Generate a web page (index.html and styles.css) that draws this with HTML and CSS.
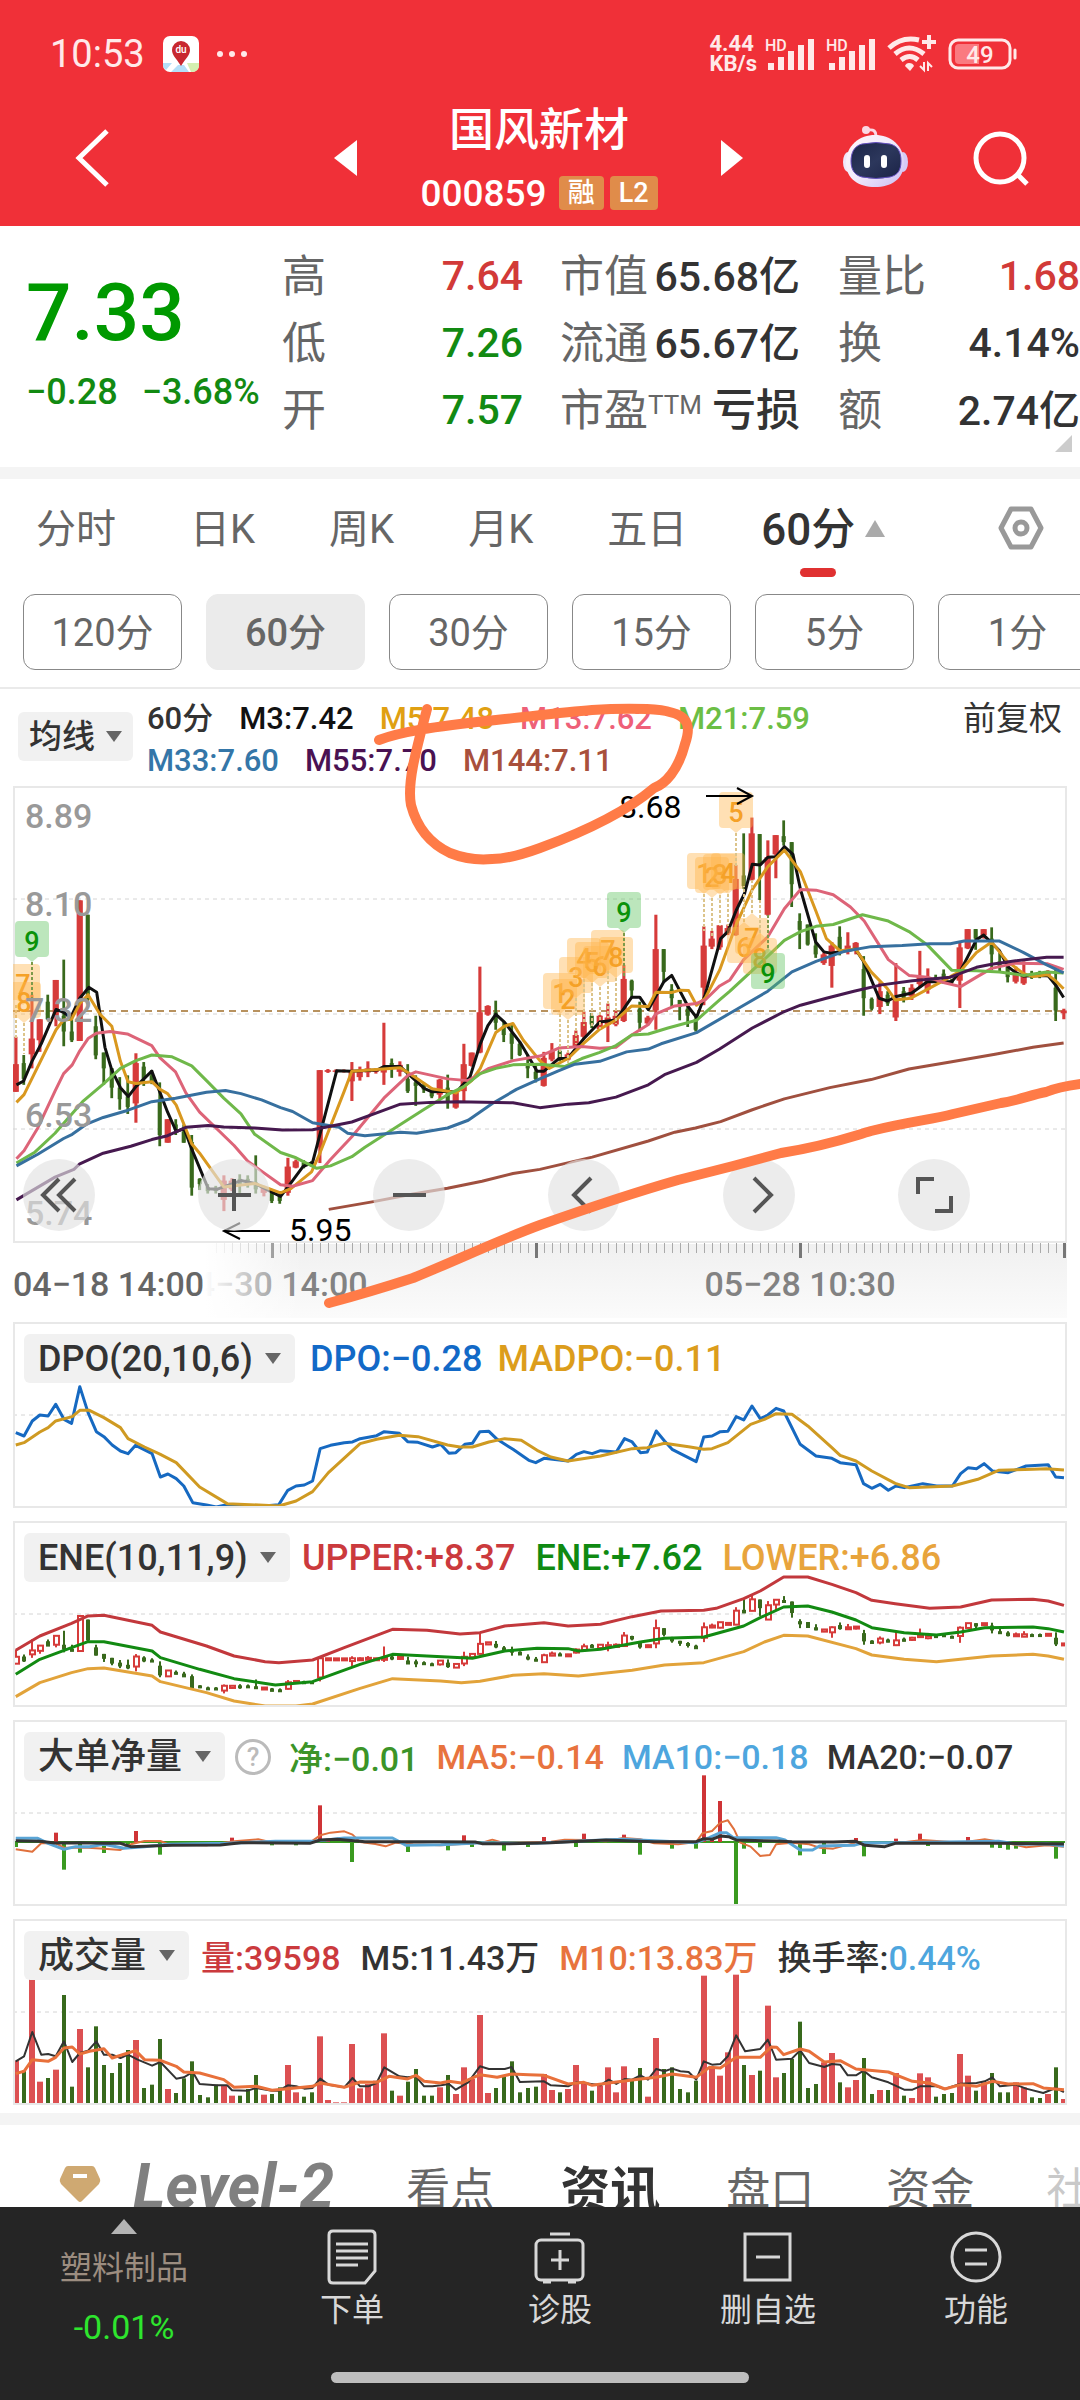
FILE: index.html
```
<!DOCTYPE html>
<html lang="zh-CN">
<head>
<meta charset="UTF-8">
<meta name="viewport" content="width=device-width, initial-scale=1.0">
<title>国风新材 000859</title>
<link rel="stylesheet" href="styles.css">
</head>
<body>
<header class="top">
    <div class="status">
        <span class="clock">10:53</span>
        <svg class="app-icon" viewBox="0 0 36 36">
            <rect width="36" height="36" rx="7" fill="#fff"/>
            <path d="M24 27h12v2q0 7-7 7h-1z" fill="#d4efb0"/>
            <path d="M0 27h9L3 34q-3-2-3-5zM15 29h6l5 7H8z" fill="#b4dff8"/>
            <path d="M18 30C13 22 9 19 9 14a9 9 0 0 1 18 0c0 5-4 8-9 16z" fill="#c8282f"/>
            <text x="18" y="17" class="du">du</text>
        </svg>
        <span class="dots"><i></i><i></i><i></i></span>
        <div class="status-right">
            <span class="speed">4.44<br>KB/s</span>
            <svg width="50" height="36" viewBox="0 0 50 36">
                <text x="0" y="15" class="hd">HD</text>
                <path d="M6 34v-7M16 34V21M26 34V15M36 34V9M46 34V3" class="bars"/>
            </svg>
            <svg width="50" height="36" viewBox="0 0 50 36">
                <text x="0" y="15" class="hd">HD</text>
                <path d="M6 34v-7M16 34V21M26 34V15M36 34V9M46 34V3" class="bars"/>
            </svg>
            <svg width="50" height="38" viewBox="0 0 50 38">
                <path d="M2 13Q15 1 32 5M8 19q14-12 29 0M14 25q9-7 17 0" class="wifi"/>
                <path d="M22 28q4 0 5 3l-4 5-5-5q1-3 4-3z" fill="#ffe9e9"/>
                <path d="M42 0v14M35 7h14" class="plus"/>
                <path d="M37 27v8l-4-4M41 36v-8l4 4" class="tiny"/>
            </svg>
            <svg width="70" height="32" viewBox="0 0 70 32">
                <rect x="2" y="2" width="60" height="28" rx="8" fill="none" stroke="#ffe9e9" stroke-width="3"/>
                <path d="M11 6h20v20H11q-4 0-4-4V10q0-4 4-4z" fill="#fa7a80"/>
                <path d="M67 12v8" stroke="#ffe9e9" stroke-width="3" stroke-linecap="round"/>
                <text x="32" y="25" class="bat">49</text>
            </svg>
        </div>
    </div>
    <nav class="titlebar">
        <button class="icon-button back" aria-label="返回"><svg width="36" height="60" viewBox="0 0 36 60"><path d="M33 3L5 30l28 27" class="chev"/></svg></button>
        <button class="icon-button prev" aria-label="上一只"><svg width="24" height="36" viewBox="0 0 24 36"><path d="M23 0v36L0 18z" fill="#fff"/></svg></button>
        <div class="stock">
            <h1>国风新材</h1>
            <p><span>000859</span><b>融</b><b>L2</b></p>
        </div>
        <button class="icon-button next" aria-label="下一只"><svg width="24" height="36" viewBox="0 0 24 36"><path d="M1 0v36l22-18z" fill="#fff"/></svg></button>
        <button class="icon-button robot" aria-label="助手"><svg width="68" height="64" viewBox="0 0 68 64">
            <defs>
                <linearGradient id="visor" x1="0" y1="0" x2="1" y2="1"><stop offset="0" stop-color="#1c2547"/><stop offset=".5" stop-color="#2c375c"/><stop offset="1" stop-color="#1b2347"/></linearGradient>
                <linearGradient id="shell" x1="0" y1="0" x2="1" y2="1"><stop offset="0" stop-color="#fff6fa"/><stop offset=".5" stop-color="#f1eafb"/><stop offset="1" stop-color="#cabcf3"/></linearGradient>
            </defs>
            <path d="M34 10q0-7-7-6" fill="none" stroke="#fbd8e4" stroke-width="3"/>
            <circle cx="24" cy="4" r="4" fill="#fbd8e4"/>
            <ellipse cx="6" cy="36" rx="5" ry="10" fill="#efe6fb"/><ellipse cx="61" cy="36" rx="5" ry="10" fill="#d6caf6"/>
            <path d="M33 9C48 9 62 19 62 37c0 16-13 24-29 24S4 53 4 37C4 19 18 9 33 9z" fill="url(#shell)"/>
            <path d="M20 18q14-3 28 0c8 2 11 8 11 17s-3 14-11 16q-14 3-28 0c-8-2-11-8-11-16s3-15 11-17z" fill="url(#visor)" stroke="#6450c0" stroke-width="1"/>
            <path d="M25 32v7M42 32v7" stroke="#fff" stroke-width="6" stroke-linecap="round"/>
        </svg></button>
        <button class="icon-button search" aria-label="搜索"><svg width="58" height="58" viewBox="0 0 58 58"><circle cx="28" cy="29" r="24" class="lens"/><path d="M45 45l10 10" class="lens"/></svg></button>
    </nav>
</header>

<section class="quote">
    <div class="price">
        <strong>7.33</strong>
        <p><span>−0.28</span><span>−3.68%</span></p>
    </div>
    <dl>
        <div><dt>高</dt><dd class="red">7.64</dd></div>
        <div><dt>低</dt><dd class="green">7.26</dd></div>
        <div><dt>开</dt><dd class="green">7.57</dd></div>
    </dl>
    <dl>
        <div><dt>市值</dt><dd class="unit">65.68亿</dd></div>
        <div><dt>流通</dt><dd class="unit">65.67亿</dd></div>
        <div><dt>市盈<sup>TTM</sup></dt><dd class="loss">亏损</dd></div>
    </dl>
    <dl>
        <div><dt>量比</dt><dd class="red">1.68</dd></div>
        <div><dt>换</dt><dd>4.14%</dd></div>
        <div><dt>额</dt><dd class="unit">2.74亿</dd></div>
    </dl>
    <i class="corner"></i>
</section>

<nav class="tabs">
    <button>分时</button>
    <button>日K</button>
    <button>周K</button>
    <button>月K</button>
    <button>五日</button>
    <button class="active">60分</button>
    <i class="up"></i>
    <button class="setting" aria-label="设置"><svg width="46" height="44" viewBox="0 0 46 44"><path d="M13 3h20l10 19-10 19H13L3 22z" /><circle cx="23" cy="22" r="6"/></svg></button>
</nav>
<div class="periods">
    <button>120分</button>
    <button class="active">60分</button>
    <button>30分</button>
    <button>15分</button>
    <button>5分</button>
    <button>1分</button>
</div>

<main class="charts">
    <div class="ma">
        <span class="pick"><select aria-label="主图指标"><option>均线</option></select></span>
        <ul class="ma-list">
            <li>60分</li>
            <li class="m3">M3:7.42</li>
            <li class="m5">M5:7.48</li>
            <li class="m13">M13:7.62</li>
            <li class="m21">M21:7.59</li>
            <li class="m33">M33:7.60</li>
            <li class="m55">M55:7.70</li>
            <li class="m144">M144:7.11</li>
        </ul>
        <span class="adjust">前复权</span>
    </div>

    <div class="kline">
        <svg class="plot" viewBox="0 0 1054 532">
            <defs>
                <linearGradient id="axisBg" x1="0" y1="0" x2="0" y2="1"><stop offset="0" stop-color="#f0f0f0"/><stop offset="1" stop-color="#fbfbfb"/></linearGradient>
                <linearGradient id="axisFade"><stop offset="0" stop-color="#fff"/><stop offset=".66" stop-color="#fff"/><stop offset="1" stop-color="#fff" stop-opacity="0"/></linearGradient>
            </defs>
            <rect x="1" y="1" width="1052" height="455" class="frame"/>
            <path d="M0 113h1054M0 228h1054M0 343h1054" class="grid"/>
            <path d="M0 225h1054" class="last"/>
            <g transform="scale(.34435 .35075) translate(-38 -45)">
                <g id="candles"></g>
                <g class="line">
                    <polyline stroke="#111" points="48,897 69,886 93,830 120,780 163,682 185,690 205,706 232,650 258,619 281,633 305,790 325,855 350,905 373,930 395,902 441,858 487,975 512,1030 535,1022 557,1080 605,1193 630,1195 700,1170 740,1178 790,1203 815,1215 835,1190 880,1130 908,1118 978,857 1020,858 1095,855 1115,845 1163,845 1185,865 1233,908 1255,917 1300,915 1325,918 1365,875 1395,780 1417,728 1440,696 1465,718 1510,775 1560,858 1580,858 1623,822 1649,822 1696,765 1742,718 1789,712 1835,647 1858,647 1883,683 1928,603 1951,585 1998,673 2023,705 2048,640 2093,480 2114,460 2138,400 2163,350 2185,268 2208,270 2230,248 2253,247 2278,218 2303,240 2325,340 2369,490 2393,518 2413,522 2485,510 2508,545 2553,650 2578,658 2603,645 2648,635 2693,603 2764,603 2788,575 2836,483 2857,470 2903,515 2927,560 2950,577 2973,587 3043,585 3068,615 3089,648"/>
                    <polyline stroke="#d9981f" points="48,947 70,925 163,740 185,712 208,710 232,665 256,640 290,695 325,730 350,830 372,888 395,893 441,888 465,910 487,922 512,955 557,1065 580,1092 650,1188 740,1178 815,1205 845,1193 905,1145 930,1090 1000,915 1022,858 1163,848 1210,878 1255,908 1300,915 1325,920 1370,885 1395,850 1440,748 1465,730 1490,722 1520,770 1568,828 1595,850 1650,822 1696,778 1742,738 1789,712 1835,672 1883,674 1905,633 1950,634 1975,627 2000,628 2023,670 2048,650 2090,570 2138,440 2185,340 2230,275 2278,228 2325,290 2369,400 2400,480 2440,515 2485,510 2530,575 2575,620 2600,655 2645,650 2693,625 2740,600 2790,572 2836,520 2880,490 2925,545 2973,580 3000,588 3043,583 3065,600 3089,623"/>
                    <polyline stroke="#dd6478" points="48,1108 70,1085 110,1020 160,915 185,865 210,840 232,800 256,765 280,750 320,745 370,752 441,785 465,820 510,860 540,920 580,975 680,1070 720,1115 815,1182 850,1186 908,1170 960,1110 1022,1045 1115,935 1185,870 1208,860 1300,880 1360,885 1400,862 1420,850 1490,828 1568,815 1623,792 1690,788 1742,793 1789,790 1835,755 1883,725 1905,695 1960,672 2023,665 2048,655 2090,615 2120,598 2160,540 2230,475 2278,395 2325,340 2370,342 2420,355 2470,390 2510,430 2580,540 2640,585 2693,590 2740,605 2790,617 2836,590 2880,565 2950,550 3043,552 3089,568"/>
                    <polyline stroke="#6fb84a" points="48,1120 100,1090 160,1035 200,990 240,945 300,895 350,850 395,828 441,812 500,817 557,843 600,885 650,935 700,980 740,1038 815,1090 860,1105 920,1135 960,1128 1022,1102 1060,1075 1163,1010 1230,968 1300,925 1347,902 1395,865 1440,850 1490,840 1568,838 1640,845 1690,822 1740,805 1789,785 1835,755 1883,752 1940,735 2023,713 2090,655 2120,630 2230,530 2278,485 2325,460 2370,445 2420,440 2505,412 2580,430 2640,460 2693,498 2764,570 2836,572 2903,575 2973,585 3040,575 3089,578"/>
                    <polyline stroke="#37709f" points="48,1128 110,1095 185,1050 210,1038 250,1010 300,990 370,970 441,945 510,935 600,918 655,913 700,922 760,940 815,962 850,973 908,1005 985,1018 1010,1035 1060,1042 1163,1032 1210,1035 1300,1020 1360,998 1430,950 1500,910 1568,880 1620,858 1670,838 1742,830 1820,803 1883,795 1920,780 2023,748 2120,693 2230,630 2300,575 2370,545 2450,517 2530,503 2620,500 2700,495 2760,495 2800,487 2903,487 2973,520 3040,555 3089,578"/>
                    <polyline stroke="#46194f" points="48,1225 160,1160 215,1138 232,1122 300,1092 380,1072 441,1053 487,1042 540,1018 605,1013 650,1017 740,1020 820,1026 908,1025 960,1015 1022,1003 1100,975 1163,952 1250,947 1330,945 1490,948 1568,962 1650,952 1710,948 1789,932 1883,897 1930,868 2023,833 2090,795 2185,735 2278,688 2325,670 2400,650 2480,630 2560,612 2650,600 2760,590 2836,562 2880,553 2950,543 3040,533 3089,533"/>
                    <polyline stroke="#a0503f" points="955,1252 1085,1230 1200,1208 1300,1192 1400,1172 1490,1150 1568,1138 1720,1103 1883,1057 1960,1032 2020,1020 2093,1002 2185,968 2278,937 2410,905 2530,882 2640,852 2760,832 2890,810 3000,790 3089,778"/>
                </g>
            </g>
            <g id="marks"></g>
            <g class="price-label">
                <text x="12" y="42">8.89</text>
                <text x="12" y="130">8.10</text>
                <text x="12" y="236">7.32</text>
                <text x="12" y="341">6.53</text>
                <text x="12" y="439">5.74</text>
            </g>
            <g class="extreme">
                <text x="606" y="32">8.68</text>
                <path d="M693 10h46M724 2l15 8-15 8"/>
                <text x="276" y="455">5.95</text>
                <path d="M257 445h-46M227 437l-16 8 16 8"/>
            </g>
            <rect x="0" y="458" width="1054" height="74" fill="url(#axisBg)"/>
            <g id="ruler"></g>
            <g class="date">
                <text x="259" y="510">04−30 14:00</text>
                <text x="787" y="510">05−28 10:30</text>
                <rect x="0" y="457" width="290" height="75" fill="url(#axisFade)"/>
                <text x="0" y="510" class="first">04−18 14:00</text>
            </g>
        </svg>
        <div class="tools">
            <button aria-label="最左"><svg viewBox="0 0 72 72"><path d="M36 20L20 36l16 16M52 20L36 36l16 16"/></svg></button>
            <button aria-label="放大"><svg viewBox="0 0 72 72"><path d="M20 36h33M36 20v32"/></svg></button>
            <button aria-label="缩小"><svg viewBox="0 0 72 72"><path d="M20 36h33"/></svg></button>
            <button aria-label="左移"><svg viewBox="0 0 72 72"><path d="M43 19L26 36l17 17"/></svg></button>
            <button aria-label="右移"><svg viewBox="0 0 72 72"><path d="M31 19l17 17-17 17"/></svg></button>
            <button aria-label="全屏"><svg viewBox="0 0 72 72"><path d="M20 35V20h16M53 37v15H37"/></svg></button>
        </div>
    </div>

    <section class="panel">
        <div class="legend">
            <span class="pick"><select aria-label="指标一"><option>DPO(20,10,6)</option></select></span>
            <span class="c-blue">DPO:−0.28</span>
            <span class="c-gold">MADPO:−0.11</span>
        </div>
        <svg class="plot" viewBox="0 0 1054 186">
            <path d="M0 93h1054" class="grid"/>
            <g class="line" transform="scale(.6887 .3333) translate(-19 -38)">
                <polyline stroke="#1669c1" points="23,370 35,380 47,335 58,317 70,320 81,285 93,330 104,342 116,232 128,310 140,367 151,382 163,407 175,425 186,433 197,408 221,433 233,503 244,494 256,508 267,530 280,580 300,587 314,593 330,586 370,592 405,586 418,543 430,530 442,527 454,515 465,418 480,408 500,400 512,398 523,388 547,379 558,367 580,372 592,397 607,399 628,413 640,405 652,432 662,430 675,405 686,402 697,367 710,366 722,390 745,420 768,453 778,460 790,447 825,455 837,435 848,427 860,433 872,424 895,428 907,388 918,398 930,430 940,428 953,365 965,395 976,420 1011,457 1022,383 1034,380 1046,367 1057,366 1069,322 1080,332 1092,290 1104,328 1115,317 1127,297 1138,305 1162,405 1185,440 1208,447 1220,460 1243,466 1254,523 1266,537 1278,525 1290,543 1301,530 1313,535 1340,523 1360,530 1383,530 1395,493 1406,475 1418,478 1429,463 1441,485 1464,490 1490,470 1522,466 1533,503 1545,505"/>
                <polyline stroke="#cf9a22" points="23,407 35,400 58,368 70,355 81,335 105,322 116,303 130,303 151,325 175,355 186,388 210,413 233,435 256,460 290,533 330,583 405,590 430,575 454,547 477,490 523,403 547,390 580,378 607,382 650,407 668,413 686,413 710,398 733,388 757,393 780,423 800,443 825,455 872,440 918,418 940,415 965,402 1000,412 1022,420 1034,418 1057,400 1090,345 1110,330 1127,313 1150,315 1173,350 1208,415 1220,438 1243,455 1266,485 1300,522 1320,535 1383,530 1420,510 1450,483 1500,480 1520,478 1545,482"/>
            </g>
        </svg>
    </section>

    <section class="panel">
        <div class="legend wide">
            <span class="pick"><select aria-label="指标二"><option>ENE(10,11,9)</option></select></span>
            <span class="c-red">UPPER:+8.37</span>
            <span class="c-green">ENE:+7.62</span>
            <span class="c-amber">LOWER:+6.86</span>
        </div>
        <svg class="plot" viewBox="0 0 1054 186">
            <path d="M0 93h1054" class="grid"/>
            <g id="eneCandles"></g>
            <g class="line" transform="scale(.6887 .3333) translate(-19 -635)">
                <polyline stroke="#c2383c" points="23,1023 58,980 104,942 128,920 151,918 186,933 221,948 233,968 300,1010 340,1040 385,1057 405,1060 454,1052 500,1015 570,960 620,963 668,974 697,970 733,950 790,940 825,950 872,945 918,922 960,905 1022,903 1040,897 1080,868 1104,845 1138,803 1173,803 1208,825 1243,850 1266,873 1300,883 1350,897 1395,893 1440,872 1500,870 1522,875 1545,888"/>
                <polyline stroke="#128a12" points="23,1095 58,1050 104,1015 128,997 151,997 221,1025 233,1045 290,1080 340,1108 400,1127 454,1117 523,1065 570,1035 620,1040 686,1047 733,1025 780,1017 825,1018 840,1025 872,1020 930,998 965,987 1022,983 1080,950 1104,925 1138,893 1173,890 1208,908 1243,932 1266,955 1313,970 1360,977 1395,968 1430,955 1500,953 1522,958 1545,968"/>
                <polyline stroke="#e2a33a" points="23,1162 58,1120 104,1090 128,1078 151,1076 221,1100 233,1117 300,1150 340,1175 385,1190 430,1190 454,1184 523,1137 570,1108 640,1115 670,1120 697,1116 745,1098 790,1093 840,1100 918,1083 965,1067 1022,1060 1080,1027 1110,998 1138,978 1173,980 1243,1018 1266,1037 1313,1050 1360,1057 1440,1040 1500,1035 1522,1040 1545,1050"/>
            </g>
        </svg>
    </section>

    <section class="panel">
        <div class="legend snug small">
            <span class="pick"><select aria-label="指标三"><option>大单净量</option></select></span>
            <button class="help" aria-label="说明">?</button>
            <span class="c-leaf">净:−0.01</span>
            <span class="c-orange">MA5:−0.14</span>
            <span class="c-sky">MA10:−0.18</span>
            <span class="c-dark">MA20:−0.07</span>
        </div>
        <svg class="plot" viewBox="0 0 1054 186">
            <path d="M0 93h1054" class="grid"/>
            <path d="M0 122h1054" stroke="#3a9a20" stroke-width="2"/>
            <g id="netBars"></g>
            <g class="line" transform="scale(.6887 .3333) translate(-19 -32)">
                <polyline class="thin" stroke="#e0703c" points="23,420 47,427 60,402 81,402 93,415 128,415 151,418 175,422 190,405 210,395 233,395 245,405 300,408 340,396 375,390 400,402 450,400 465,378 480,370 500,366 512,376 523,398 545,404 560,411 575,400 600,405 640,408 700,400 715,391 730,400 800,397 820,391 850,392 880,396 905,386 930,390 950,402 985,405 1011,398 1020,372 1034,365 1046,340 1057,333 1066,360 1075,400 1090,412 1104,440 1118,437 1127,405 1150,400 1175,405 1190,415 1210,418 1243,400 1300,402 1340,392 1395,400 1430,390 1460,400 1490,414 1520,408 1545,412"/>
                <polyline stroke="#5aa5d6" points="23,387 55,387 70,402 93,420 110,412 130,412 151,405 180,417 210,412 245,405 330,402 400,396 460,395 500,386 570,386 590,408 640,406 700,400 780,402 850,394 905,390 950,394 1011,400 1030,385 1046,370 1055,370 1065,385 1127,385 1140,392 1162,422 1180,422 1190,410 1240,408 1254,400 1300,400 1450,396 1480,405 1520,403 1545,410"/>
                <polyline stroke="#333" points="23,394 58,396 80,401 116,400 151,402 175,402 190,412 250,408 320,407 350,400 450,402 465,392 490,390 530,397 640,397 690,398 700,403 740,403 800,400 880,392 950,397 1011,397 1022,388 1034,390 1046,380 1058,382 1069,392 1127,395 1150,397 1210,398 1243,396 1256,408 1285,412 1300,402 1450,402 1545,404"/>
            </g>
        </svg>
    </section>

    <section class="panel">
        <div class="legend wide small">
            <span class="pick"><select aria-label="指标四"><option>成交量</option></select></span>
            <span class="c-red">量:39598</span>
            <span class="c-dark">M5:11.43万</span>
            <span class="c-orange">M10:13.83万</span>
            <span class="c-dark">换手率:<em>0.44%</em></span>
        </div>
        <svg class="plot" viewBox="0 0 1054 186">
            <path d="M0 93h1054" class="grid"/>
            <g id="volBars"></g>
            <g class="line" transform="scale(.6887 .3333) translate(-19 -628)">
                <polyline stroke="#333" class="thin" points="23,1055 35,1040 47,967 60,1035 70,1033 81,1040 93,995 105,1057 116,1030 128,1023 140,995 151,1035 163,1035 175,1045 186,1035 200,1050 221,1068 233,1057 256,1107 267,1103 280,1087 290,1123 314,1127 330,1127 337,1142 360,1143 372,1135 395,1143 405,1143 418,1127 430,1130 442,1137 454,1135 465,1107 477,1125 500,1133 512,1105 523,1130 535,1130 547,1120 558,1073 580,1100 592,1103 604,1100 616,1130 628,1130 640,1127 652,1123 662,1140 680,1118 697,1070 710,1078 733,1078 743,1072 755,1117 790,1115 800,1127 825,1130 837,1118 848,1120 872,1127 884,1110 895,1123 907,1108 918,1110 930,1097 941,1110 953,1078 965,1085 976,1077 988,1085 1000,1087 1011,1110 1022,1055 1034,1065 1046,1063 1057,1040 1069,977 1082,1025 1104,1018 1115,990 1127,1050 1150,1047 1162,1022 1175,1060 1197,1072 1208,1063 1220,1065 1231,1097 1243,1097 1254,1083 1266,1103 1290,1118 1313,1140 1325,1140 1336,1130 1360,1130 1372,1138 1395,1122 1418,1120 1430,1115 1441,1103 1452,1130 1475,1125 1490,1137 1515,1150 1533,1135 1545,1147"/>
                <polyline stroke="#e8703a" points="23,1092 35,1085 47,1050 70,1055 81,1043 93,1015 105,1012 116,1033 130,1025 151,1017 163,1045 186,1030 197,1023 210,1050 233,1052 256,1070 267,1087 290,1090 325,1110 340,1133 372,1130 395,1142 418,1137 454,1130 465,1120 500,1133 523,1117 547,1118 565,1100 592,1108 604,1097 616,1115 640,1120 652,1115 670,1120 697,1095 722,1103 743,1093 768,1095 790,1097 825,1123 848,1118 860,1127 895,1117 930,1108 953,1103 976,1093 1011,1103 1030,1073 1046,1075 1069,1043 1104,1043 1120,1012 1128,1013 1138,1035 1162,1018 1175,1025 1197,1057 1220,1053 1243,1078 1290,1087 1325,1115 1350,1120 1372,1138 1395,1125 1418,1130 1441,1115 1464,1123 1500,1122 1515,1135 1545,1140"/>
            </g>
        </svg>
    </section>

    <!-- hand drawn marks over the charts -->
    <svg class="pen" viewBox="0 690 1080 640">
        <path d="M379 741C400 733 430 728 496 721S600 708 647 710C690 712 692 725 685 745C678 772 665 785 654 789C620 818 570 838 540 849Q510 860 492 860Q470 862 450 854Q420 840 411 806C407 785 415 755 427 710"/>
        <path d="M329 1304Q370 1293 413 1279C455 1262 499 1241 540 1226C574 1214 626 1196 678 1181L733 1167L781 1154C830 1146 850 1138 871 1132C912 1122 930 1121 953 1115L1001 1104C1020 1101 1030 1096 1046 1093Q1060 1087 1088 1084"/>
    </svg>
</main>

<nav class="info-tabs">
    <svg width="42" height="38" viewBox="0 0 42 38"><path d="M9 1h24q2 0 3 2l5 11q1 2-1 5L23 36q-2 2-4 0L2 19q-2-3-1-5L6 3q1-2 3-2z" fill="#cfa972"/><path d="M14 11h14" stroke="#fff" stroke-width="4"/></svg>
    <a href="#" class="level">Level-2</a>
    <a href="#">看点</a>
    <a href="#" class="active">资讯</a>
    <a href="#">盘口</a>
    <a href="#">资金</a>
    <a href="#" class="more">社区</a>
</nav>

<footer class="dock">
    <div class="dock-row">
        <div class="sector">
            <i class="up"></i>
            <span>塑料制品</span>
            <b>-0.01%</b>
        </div>
        <button><svg width="58" height="56" viewBox="0 0 58 56"><path d="M10 2h38q4 0 4 4v36L42 54H10q-4 0-4-4V6q0-4 4-4zM13 15h32M13 22h32M13 29h32M13 36h22"/></svg>下单</button>
        <button><svg width="58" height="56" viewBox="0 0 58 56"><rect x="5" y="11" width="47" height="40" rx="5"/><path d="M19 5h20M29 21v20M20 31h18M12 53h8M37 53h8"/></svg>诊股</button>
        <button><svg width="58" height="56" viewBox="0 0 58 56"><rect x="6" y="5" width="45" height="46"/><path d="M17 28h24"/></svg>删自选</button>
        <button><svg width="58" height="56" viewBox="0 0 58 56"><circle cx="29" cy="28" r="24"/><path d="M18 21h22M18 35h22"/></svg>功能</button>
    </div>
    <i class="home"></i>
</footer>
<script src="chart.js"></script>
</body>
</html>
```
FILE: styles.css
```
* {
    box-sizing: border-box;
    margin: 0;
    padding: 0;
}
body {
    font-family: Roboto, "Noto Sans CJK SC", sans-serif;
    font-size: 36px;
    font-weight: 500;
    color: #333;
    background: #fff;
    overflow-x: hidden;
}
button, select {
    font: inherit;
    color: inherit;
    background: none;
    border: none;
    cursor: pointer;
}
a {
    color: inherit;
    text-decoration: none;
}
i, em {
    font-style: normal;
}
svg {
    display: block;
    flex: none;
}

/* header */
.top {
    background: #f03038;
    color: #fff;
    height: 226px;
}
.status {
    display: flex;
    align-items: center;
    height: 72px;
    padding: 36px 62px 0 50px;
    color: #ffe9e9;
}
.clock {
    font-size: 38px;
    font-weight: 400;
    line-height: 36px;
}
.app-icon {
    width: 36px;
    height: 36px;
    margin: 0 18px;
}
.du {
    font-size: 10px;
    fill: #fff;
    text-anchor: middle;
}
.dots {
    display: flex;
    gap: 6px;
}
.dots i {
    width: 6px;
    height: 6px;
    border-radius: 50%;
    background: #ffe9e9;
}
.status-right {
    display: flex;
    align-items: center;
    gap: 11px;
    margin-left: auto;
}
.speed {
    font-size: 22px;
    font-weight: 700;
    line-height: 20px;
    margin-right: -3px;
}
.hd {
    font-size: 16px;
    fill: #ffe9e9;
}
.bars, .wifi, .plus, .tiny {
    fill: none;
    stroke: #ffe9e9;
    stroke-width: 6;
}
.wifi {
    stroke-width: 5;
}
.plus {
    stroke-width: 4;
}
.tiny {
    stroke-width: 2;
}
.bat {
    font-size: 24px;
    fill: #ffe9e9;
    text-anchor: middle;
}
.titlebar {
    display: flex;
    align-items: center;
    height: 154px;
    padding: 18px 50px 0 74px;
}
.icon-button {
    flex: none;
}
.prev {
    margin-left: auto;
}
.stock {
    width: 362px;
    padding-top: 10px;
    text-align: center;
}
.stock h1 {
    font-size: 45px;
    line-height: 60px;
    font-weight: 500;
}
.stock p {
    display: flex;
    justify-content: center;
    align-items: center;
    gap: 6px;
    height: 64px;
    font-size: 37px;
}
.stock span {
    margin-right: 6px;
}
.stock b {
    font-size: 27px;
    font-weight: 500;
    line-height: 34px;
    padding: 0 9px;
    border-radius: 4px;
    background: #e08c4a;
}
.robot {
    margin-left: 98px;
}
.search {
    margin-left: 62px;
}
.chev, .lens {
    fill: none;
    stroke: #fff;
    stroke-width: 5;
}

/* quote */
.quote {
    position: relative;
    display: flex;
    height: 253px;
    padding-top: 16px;
    border-bottom: 12px solid #f4f4f4;
}
.price {
    width: 282px;
    padding-left: 26px;
    color: #009900;
}
.price strong {
    display: block;
    font-size: 80px;
    font-weight: 500;
    line-height: 100px;
    padding-top: 21px;
}
.price p {
    display: flex;
    gap: 24px;
    padding-top: 8px;
    line-height: 42px;
    white-space: nowrap;
    color: #128a12;
}
.quote dl {
    width: 241px;
    margin-right: 37px;
}
.quote dl + dl {
    width: 240px;
    margin-right: 38px;
}
.quote dl:last-of-type {
    flex: 1;
    margin-right: 0;
}
.quote dl div {
    display: flex;
    justify-content: space-between;
    align-items: center;
    height: 67px;
    white-space: nowrap;
}
.quote dt {
    padding-bottom: 6px;
    font-size: 44px;
    font-weight: 400;
    color: #666;
}
.quote dd {
    font-size: 41px;
}
.quote sup {
    font-size: 26px;
    vertical-align: 12px;
}
.quote .unit {
    padding-bottom: 6px;
}
.quote .loss {
    padding-bottom: 6px;
    font-size: 44px;
}
.red {
    color: #d23a38;
}
.green {
    color: #128a12;
}
.corner {
    position: absolute;
    right: 8px;
    bottom: 15px;
    border-left: 17px solid transparent;
    border-bottom: 17px solid #ccc;
}

/* period tabs */
.tabs {
    display: flex;
    align-items: center;
    gap: 74px;
    height: 98px;
    padding: 0 36px;
    font-size: 40px;
    color: #666;
}
.tabs button {
    flex: none;
    height: 98px;
    padding-bottom: 5px;
    font-weight: 400;
}
.tabs .active {
    position: relative;
    font-size: 44px;
    font-weight: 500;
    color: #333;
}
.tabs .active::after {
    content: "";
    position: absolute;
    left: 50%;
    bottom: 0;
    width: 36px;
    height: 9px;
    margin-left: -8px;
    border-radius: 5px;
    background: #e03131;
}
.up {
    border: 10px solid transparent;
    border-top: none;
    border-bottom: 17px solid #aaa;
}
.tabs .up {
    margin-left: -64px;
}
.setting svg {
    fill: none;
    stroke: #999;
    stroke-width: 5;
    stroke-linejoin: round;
}
.tabs .setting {
    margin-left: auto;
    padding: 0;
}
.periods {
    display: flex;
    gap: 24px;
    padding: 17px 0 17px 23px;
    border-bottom: 2px solid #eaeaea;
    overflow: hidden;
}
.periods button {
    flex: none;
    width: 159px;
    height: 76px;
    padding-bottom: 5px;
    border: 1px solid #888;
    border-radius: 12px;
    font-size: 38px;
    font-weight: 400;
    color: #666;
}
.periods .active {
    border-color: #ebebeb;
    background: #ebebeb;
    font-weight: 500;
}

/* main chart */
.charts {
    position: relative;
    padding: 0 13px 8px;
}
.ma {
    display: flex;
    height: 97px;
    padding: 9px 5px 0;
    font-size: 31px;
}
.pick {
    position: relative;
    flex: none;
    height: 49px;
    border-radius: 6px;
    background: #f1f1f1;
    font-size: 36px;
}
.pick select {
    appearance: none;
    height: 49px;
    padding: 0 42px 0 14px;
    color: #333;
    opacity: 1;
}
.pick::after {
    content: "";
    position: absolute;
    right: 14px;
    top: 19px;
    border: 8px solid transparent;
    border-bottom: none;
    border-top: 11px solid #666;
    pointer-events: none;
}
.ma .pick {
    margin-top: 14px;
    font-size: 33px;
}
.ma .pick select {
    padding: 0 38px 0 11px;
}
.ma .pick::after {
    right: 11px;
}
.ma-list {
    flex: 1;
    display: flex;
    flex-wrap: wrap;
    align-content: flex-start;
    gap: 0 26px;
    padding: 0 48px 0 14px;
    list-style: none;
    line-height: 42px;
}
.adjust {
    font-size: 33px;
    font-weight: 400;
    line-height: 42px;
}
.m3 { color: #111; }
.m5 { color: #e0a012; }
.m13 { color: #ee6078; }
.m21 { color: #6cbe45; }
.m33 { color: #3476a8; }
.m55 { color: #4a1252; }
.m144 { color: #a8503c; }

.kline {
    position: relative;
    margin-bottom: 4px;
}
.plot {
    width: 100%;
    height: auto;
}
.frame {
    fill: none;
    stroke: #e8e8e8;
    stroke-width: 2;
}
.grid {
    stroke: #d4d4d4;
    stroke-width: 1;
    stroke-dasharray: 4 4;
}
.last {
    stroke: #b8925f;
    stroke-width: 2;
    stroke-dasharray: 7 5;
}
.line polyline {
    fill: none;
    stroke-width: 3;
    stroke-linejoin: round;
    vector-effect: non-scaling-stroke;
}
.line .thin {
    stroke-width: 2;
}
.price-label {
    font-size: 34px;
    fill: #999;
}
.extreme text {
    font-size: 32px;
    font-weight: 400;
    fill: #000;
}
.extreme path {
    fill: none;
    stroke: #000;
    stroke-width: 2;
}
.date {
    font-size: 34px;
    fill: #828282;
    text-anchor: middle;
}
.date .first {
    fill: #666;
    text-anchor: start;
}
.mark {
    font-size: 27px;
    text-anchor: middle;
}
.tools {
    position: absolute;
    left: 10px;
    right: 97px;
    top: 373px;
    display: flex;
    justify-content: space-between;
}
.tools button {
    width: 72px;
    height: 72px;
    border-radius: 50%;
    background: rgba(226, 226, 226, .65);
}
.tools path {
    fill: none;
    stroke: #555;
    stroke-width: 4;
}

/* indicator panels */
.panel {
    position: relative;
    margin-bottom: 13px;
    outline: 2px solid #e8e8e8;
    outline-offset: -2px;
}
.panel:last-of-type {
    margin-bottom: 0;
}
.legend {
    position: absolute;
    left: 11px;
    top: 12px;
    display: flex;
    align-items: center;
    gap: 15px;
    white-space: nowrap;
}
.legend.wide {
    gap: 20px;
}
.legend.wide .pick {
    margin-right: -8px;
}
.legend.snug {
    gap: 18px;
}
.legend.snug .pick {
    margin-right: -8px;
}
.legend.small {
    font-size: 34px;
}
.help {
    width: 36px;
    height: 36px;
    border: 3px solid #bbb;
    border-radius: 50%;
    font-size: 26px;
    line-height: 30px;
    color: #bbb;
}
.c-blue { color: #1269c7; }
.c-gold { color: #dc9d1c; }
.c-red { color: #cb3a3d; }
.c-green { color: #0f8a12; }
.c-amber { color: #e8a43c; }
.c-leaf { color: #3b9428; }
.c-orange { color: #e8733e; }
.c-sky, .legend em { color: #4ea6de; }
.c-dark { color: #333; }

.pen {
    position: absolute;
    left: 0;
    top: 0;
    width: 100%;
    height: auto;
    pointer-events: none;
}
.pen path {
    fill: none;
    stroke: #ff7b47;
    stroke-width: 10;
    stroke-linecap: round;
    stroke-linejoin: round;
}

/* info tabs */
.info-tabs {
    display: flex;
    align-items: center;
    height: 134px;
    padding-left: 59px;
    border-top: 12px solid #f4f4f4;
    font-size: 44px;
    font-weight: 400;
    color: #666;
    white-space: nowrap;
    overflow: hidden;
}
.info-tabs svg {
    margin-bottom: 4px;
}
.info-tabs a {
    margin-left: 72px;
}
.info-tabs .level {
    margin-left: 32px;
    font-size: 62px;
    font-weight: 700;
    font-style: italic;
    color: #808080;
}
.info-tabs .active {
    margin: 0 -6px 0 66px;
    font-size: 50px;
    font-weight: 700;
    color: #333;
}
.info-tabs .more {
    opacity: .35;
}

/* bottom dock */
.dock {
    position: fixed;
    left: 0;
    right: 0;
    bottom: 0;
    height: 193px;
    background: #252525;
    color: #d8d8d8;
    font-size: 32px;
    font-weight: 400;
}
.dock-row {
    display: flex;
}
.sector {
    width: 248px;
    display: flex;
    flex-direction: column;
    align-items: center;
    padding-top: 12px;
    color: #9c8d80;
}
.sector .up {
    border-width: 0 13px 15px;
    border-bottom-color: #b4b4b4;
}
.sector span {
    line-height: 68px;
}
.sector b {
    font-size: 34px;
    font-weight: 400;
    line-height: 50px;
    color: #2ee52e;
}
.dock button {
    flex: 1;
    display: flex;
    flex-direction: column;
    align-items: center;
    padding-top: 22px;
    line-height: 50px;
}
.dock svg {
    fill: none;
    stroke: #d8d8d8;
    stroke-width: 3;
}
.home {
    position: absolute;
    left: 50%;
    bottom: 17px;
    width: 418px;
    height: 11px;
    margin-left: -209px;
    border-radius: 6px;
    background: #bebebe;
}
```
FILE: chart.js
```
// direction, high, body top, body bottom, low
const candles = `r760,838,917,917 g812,835,880,897 r640,765,810,850 r710,710,770,803 g640,660,710,712 r598,598,700,730 g540,700,745,787 g700,745,770,775 r371,371,772,772 g412,412,640,667
g700,730,813,824 g805,805,850,897 g850,850,905,935 g875,905,938,968 g870,930,960,980 r807,835,950,1005 g832,845,880,900 g855,870,890,895 g890,940,1040,1072 r995,995,1062,1062
g995,1010,1025,1040 g1010,1030,1062,1062 g1040,1060,1190,1213 g1163,1165,1180,1197 g1180,1188,1200,1207 g1185,1190,1200,1207 r1155,1170,1225,1257 r1163,1170,1195,1200 g1152,1165,1180,1205 g1155,1165,1180,1190
g1098,1175,1195,1207 r1185,1190,1205,1215 g1195,1200,1228,1234 g1200,1210,1228,1236 r1105,1130,1205,1213 r1110,1115,1133,1135 g1112,1118,1130,1135 g1115,1118,1126,1130 r855,855,1075,1120 r852,855,860,863
r853,856,860,862 r853,856,860,862 r832,855,887,943 r845,855,875,885 r830,850,862,875 r850,855,860,865 r720,850,862,897 g822,835,850,877 r830,840,860,873 g838,880,915,920
g870,890,900,957 g890,900,910,920 g905,912,930,935 r880,882,925,938 g868,905,945,965 r920,920,962,965 r780,838,915,945 r805,805,843,845 r560,690,805,807 r670,672,697,700
g657,690,720,740 g715,730,755,775 g722,750,780,825 g775,780,812,815 g810,835,850,878 g840,860,880,890 r803,820,900,902 r778,800,825,830 g788,800,822,830 r805,810,825,828
r742,755,790,800 r688,718,760,765 g692,700,725,735 r698,700,738,740 r665,705,725,775 r685,700,725,730 r555,595,715,718 g597,600,628,650 g660,680,720,745 r700,705,722,725
r412,510,685,740 g510,510,575,605 g610,625,650,677 g655,655,675,713 g670,680,700,732 g700,710,740,745 r445,500,620,670 r458,480,503,510 r442,442,505,512 r440,450,465,470
r270,310,470,472 g180,300,330,338 r135,180,312,315 g182,182,270,370 r200,248,412,415 r185,185,240,308 g143,188,205,215 g205,205,325,390 g408,430,455,510 g440,440,497,500
g465,500,525,535 r520,525,550,555 r490,500,558,620 g445,475,510,528 r462,500,515,525 r490,492,510,525 g530,567,650,700 g648,652,680,685 r605,630,675,695 g630,640,665,672
r550,650,705,715 g618,630,655,662 r610,620,645,655 r515,590,610,620 r565,600,625,637 g583,590,600,605 g568,580,600,608 g595,598,606,610 r490,505,600,678 r453,453,508,510
g453,453,480,512 r453,453,470,480 g448,480,525,570 g520,545,560,575 g545,560,590,605 r560,580,603,608 r545,580,608,612 g572,578,590,595 g572,578,588,593 r570,575,585,590
g558,620,685,715 r680,685,693,710`.split(/\s+/).map(s => [s[0], ...s.slice(1).split(',').map(Number)]);

const red = '#d63b3a', green = '#38691c';
const px = i => 3 + 8 * i;
const rect = (x, y, w, h, fill, extra = '') =>
    `<rect x="${x}" y="${y}" width="${w}" height="${h}" fill="${fill}" ${extra}/>`;
const put = (id, html) => { document.getElementById(id).innerHTML = html; };

// main chart, drawn in the same space as the average lines
put('candles', candles.map(([c, hi, top, bot, low], i) => {
    const x = 46 + 23.23 * i, color = c === 'r' ? red : green, w = c === 'r' ? 18 : 12;
    return rect(x - 4, hi, c === 'r' ? 9 : 8, low - hi, color) + rect(x - w / 2, top, w, bot - top, color);
}).join(''));

// ENE candles: red ones are hollow
put('eneCandles', candles.map(([c, hi, top, bot, low], i) => {
    const y = v => (920 + (v - 371) * .262 - 635) / 3, x = px(i);
    const h = Math.max(y(bot) - y(top), 2);
    return c === 'r'
        ? rect(x - 1, y(hi), 2, y(low) - y(hi), red) + rect(x - 2, y(top), 5, h, '#fff', `stroke="${red}" stroke-width="2"`)
        : rect(x - 1, y(hi), 2, y(low) - y(hi), green) + rect(x - 2, y(top), 4, h + 1, green);
}).join(''));

const net = { 5: 28, 15: 33, 27: 13, 38: 110, 39: 10, 56: 20, 66: 15, 71: 25, 76: 22, 86: 200, 87: 15, 88: 123, 105: 12, 110: 10, 113: 25, 119: 15,
    0: -15, 6: -83, 8: -32, 11: -33, 14: -15, 18: -38, 32: -10, 35: -10, 42: -60, 49: -30, 54: -25, 57: -15, 61: -26, 64: -15, 70: -15, 78: -38,
    82: -20, 85: -20, 90: -188, 91: -20, 93: -16, 98: -40, 101: -36, 106: -43, 114: -12, 122: -17, 123: -18, 124: -23, 125: -20, 130: -50 };
put('netBars', Object.entries(net).map(([i, v]) =>
    rect(px(i) - 2, v > 0 ? 122 - v / 3 : 122, 4, Math.abs(v) / 3, v > 0 ? '#cf3436' : '#3a9a20')).join(''));

const vol = [133, 103, 391, 70, 81, 106, 330, 55, 228, 113, 236, 120, 96, 126, 165, 195, 51, 61, 198, 48, 36, 80, 131, 30, 23, 61, 58, 28, 28, 48,
    90, 31, 33, 53, 120, 38, 25, 38, 206, 15, 8, 8, 183, 50, 63, 73, 215, 43, 28, 70, 108, 28, 28, 53, 90, 33, 113, 78, 270, 36,
    51, 85, 131, 38, 51, 55, 93, 45, 38, 48, 120, 63, 43, 58, 113, 38, 116, 78, 111, 25, 201, 108, 113, 48, 38, 73, 388, 113, 88, 158,
    391, 120, 90, 103, 298, 83, 96, 138, 250, 51, 63, 128, 156, 68, 53, 75, 141, 33, 45, 45, 96, 28, 21, 95, 83, 25, 33, 36, 153, 88,
    43, 68, 96, 38, 38, 68, 53, 23, 21, 33, 113, 18];
put('volBars', vol.map((v, i) => candles[i][0] === 'r'
    ? rect(px(i) - 3, 186 - v / 3, 6, v / 3, '#dc5052')
    : rect(px(i) - 2, 186 - v / 3, 4, v / 3, green)).join(''));

// numbered signals: digit, x, top of the box, end of the dotted line, x of the line
const marks = [[7, 10, 178, 254, 3], [8, 11, 196, 268, 11], [9, 19, 135, 215, 19],
    [1, 547, 187, 273, 547], [2, 555, 193, 278, 555], [3, 563, 171, 258, 563], [4, 571, 152, 240, 571], [5, 579, 156, 242, 579], [6, 587, 160, 243, 587],
    [7, 595, 144, 232, 595], [8, 603, 151, 238, 603], [9, 611, 106, 190, 611],
    [1, 691, 67, 145, 691], [2, 699, 71, 150, 699], [3, 707, 68, 140, 707], [4, 715, 67, 140, 715], [5, 723, 6, 80, 723],
    [6, 731, 141, 100, 731], [7, 739, 132, 92, 739], [8, 747, 152, 112, 747], [9, 755, 167, 128, 755]];
put('marks', marks.map(([n, x, y, end, lx]) => {
    const bg = n === 9 ? '#5fc35f' : '#ffb44d', fg = n === 9 ? '#0a920a' : '#f5a127';
    const tip = end > y ? `M${x - 6} ${y + 36}h12l-6 5z` : `M${x - 6} ${y}h12l-6-5z`;
    return `<path d="M${lx} ${end > y ? y + 41 : y - 5}V${end}" stroke="${n === 9 ? '#7d9a4a' : '#dcc48a'}" stroke-width="2" stroke-dasharray="3 2"/>`
        + rect(x - 17, y, 34, 36, bg, 'rx="4" opacity=".42"') + `<path d="${tip}" fill="${bg}" opacity=".42"/>`
        + `<text class="mark" x="${x}" y="${y + 30}" fill="${fg}">${n}</text>`;
}).join(''));

// time ruler: a long tick every 33 bars
let ruler = '';
for (let i = 25; i < 132; i++) {
    const big = (i + 1) % 33 === 0;
    ruler += rect(px(i) - (big ? 1 : 0), 457, big ? 3 : 1, big ? 15 : 10, big ? '#777' : '#aaa');
}
put('ruler', ruler);
```
